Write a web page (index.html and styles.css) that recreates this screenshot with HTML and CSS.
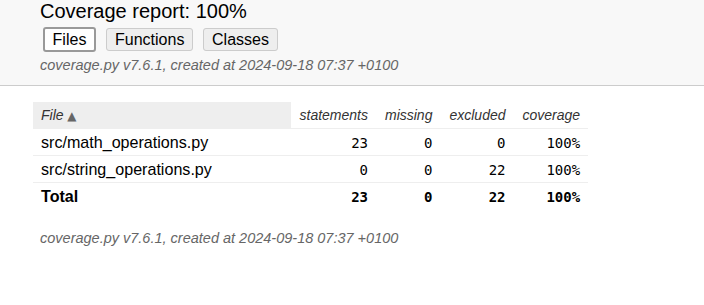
FILE: index.html
```html
<!DOCTYPE html>
<html lang="en">
<head>
<meta charset="utf-8">
<title>Coverage report</title>
<link rel="stylesheet" href="styles.css">
</head>
<body class="indexfile">
<header>
  <div class="content">
    <h1>Coverage report: <span class="pc_cov">100%</span></h1>
    <h2>
      <a class="button current">Files</a>
      <a class="button">Functions</a>
      <a class="button">Classes</a>
    </h2>
    <p class="text">coverage.py v7.6.1, created at 2024-09-18 07:37 +0100</p>
  </div>
</header>
<main id="index">
  <table class="index">
    <thead>
      <tr class="tablehead">
        <th class="name sorted">File<span class="arrows"> ▲</span></th>
        <th>statements</th>
        <th>missing</th>
        <th>excluded</th>
        <th>coverage</th>
      </tr>
    </thead>
    <tbody>
      <tr class="region">
        <td class="name">src/math_operations.py</td>
        <td>23</td>
        <td>0</td>
        <td>0</td>
        <td>100%</td>
      </tr>
      <tr class="region">
        <td class="name">src/string_operations.py</td>
        <td>0</td>
        <td>0</td>
        <td>22</td>
        <td>100%</td>
      </tr>
    </tbody>
    <tfoot>
      <tr class="total">
        <td class="name">Total</td>
        <td>23</td>
        <td>0</td>
        <td>22</td>
        <td>100%</td>
      </tr>
    </tfoot>
  </table>
</main>
<footer>
  <div class="content">
    <p>coverage.py v7.6.1, created at 2024-09-18 07:37 +0100</p>
  </div>
</footer>
</body>
</html>
```

FILE: styles.css
```css
html, body, h1, h2, h3, p, table, td, th {
  margin: 0;
  padding: 0;
  border: 0;
  font-weight: inherit;
  font-style: inherit;
  font-size: 100%;
  font-family: inherit;
  vertical-align: baseline;
}

body {
  font-family: "Liberation Sans", Arial, sans-serif;
  font-size: 16px;
  background: #fff;
  color: #000;
}

header {
  background: #f8f8f8;
  border-bottom: 1px solid #ccc;
}

header .content {
  padding: 0 40px 20px;
}

h1 {
  font-size: 20px;
  display: inline-block;
}

header h2 {
  margin-top: 8px;
  font-size: 16px;
}

header h2 .button {
  font-family: inherit;
  font-size: inherit;
  border: 1px solid #ccc;
  border-radius: 3px;
  background: #eee;
  color: inherit;
  text-decoration: none;
  padding: 2px 8px;
  margin: 1px 2.6px;
  cursor: pointer;
}

header h2 .button.current {
  border: 2px solid #999;
  background: #fff;
  cursor: default;
}

header p.text {
  margin: 8px 0 -8px;
  color: #666;
  font-style: italic;
  font-size: 14.5px;
}

#index {
  display: block;
  padding: 16px 40px 0;
  font-family: "DejaVu Sans Mono", monospace;
  font-size: 14px;
}

table.index {
  margin-left: -7px;
  border-collapse: collapse;
}

table.index td,
table.index th {
  text-align: right;
  padding: 3.5px 8px;
  border-bottom: 1px solid #eee;
}

table.index th {
  font-family: "Liberation Sans", Arial, sans-serif;
  font-style: italic;
  color: #333;
  padding: 5px 8px 5px 9px;
}

table.index th.name,
table.index td.name {
  text-align: left;
  font-family: "Liberation Sans", Arial, sans-serif;
  min-width: 15em;
}

table.index th.name {
  padding-left: 8px;
}

table.index th.sorted {
  white-space: nowrap;
  background: #eee;
}

table.index th .arrows {
  color: #666;
  font-size: 85%;
  font-family: "DejaVu Sans", sans-serif;
  font-style: normal;
}

table.index td.name {
  font-size: 16.1px;
}

table.index tr.total td {
  font-weight: bold;
  border-top: 1px solid #ccc;
  border-bottom: none;
}

footer {
  margin: 21px 40px 16px;
}

footer .content p {
  color: #666;
  font-style: italic;
  font-size: 14.5px;
}
```
